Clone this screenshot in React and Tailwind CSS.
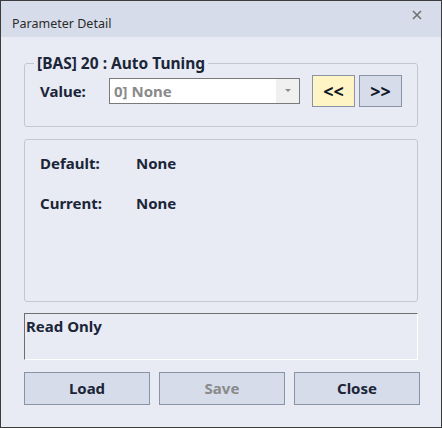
import React from 'react';

const font = { fontFamily: '"Noto Sans", "Open Sans", sans-serif' };

const ParameterDetail = () => {
  return (
    <div className="w-[442px] h-[428px] border border-[#3c3c3c] bg-[#e8ebf4] flex flex-col text-[#1b2538]" style={font}>
      {/* title bar */}
      <div className="h-[36px] bg-[#d6dce9] flex items-start justify-between pl-[11px] pr-[19px] shrink-0">
        <span className="mt-[14px] text-[12.5px] leading-[17px] text-[#2b2b2b]">Parameter Detail</span>
        <svg width="10" height="10" viewBox="0 0 10 10" className="mt-[9px]">
          <path d="M1 1 L9 9 M9 1 L1 9" stroke="#707070" strokeWidth="1.6" />
        </svg>
      </div>

      <div className="px-[23px] pt-[16px] flex flex-col">
        <fieldset className="m-0 border border-[#c3c7d0] rounded-[3px] px-[15px] pt-[2px] pb-[19px]">
          <legend className="ml-[-6px] px-[3px] text-[15.5px] font-bold leading-[20px]">[BAS] 20 : Auto Tuning</legend>
          <div className="flex items-center">
            <span className="w-[69px] text-[15px] font-bold">Value:</span>
            <div className="w-[191px] h-[26px] border border-[#7a7a7a] bg-white flex items-center justify-between">
              <span className="pl-[4px] text-[15px] font-bold text-[#8a8a8a]">0] None</span>
              <div className="w-[23px] h-full bg-[#f0f0f0] flex items-center justify-center">
                <svg width="6" height="4" viewBox="0 0 6 4">
                  <path d="M0 0 L6 0 L3 3 Z" fill="#8a8a8a" />
                </svg>
              </div>
            </div>
            <button className="ml-[12px] w-[43px] h-[32px] border border-[#8a93a5] bg-[#fff5c4] text-[18px] font-bold leading-none text-[#101828]">&lt;&lt;</button>
            <button className="ml-[4px] w-[43px] h-[32px] border border-[#8a93a5] bg-[#d6dce9] text-[18px] font-bold leading-none text-[#101828]">&gt;&gt;</button>
          </div>
        </fieldset>

        <div className="mt-[12px] h-[163px] border border-[#c3c7d0] rounded-[3px] px-[15px] pt-[13px] flex flex-col gap-[20px]">
          <div className="flex text-[15px] font-bold leading-[20px]">
            <span className="w-[96px]">Default:</span>
            <span>None</span>
          </div>
          <div className="flex text-[15px] font-bold leading-[20px]">
            <span className="w-[96px]">Current:</span>
            <span>None</span>
          </div>
        </div>

        <div className="mt-[11px] h-[47px] border border-t-[#6e6e6e] border-l-[#6e6e6e] border-r-white border-b-white px-[1px]">
          <span className="text-[15px] font-bold leading-[20px]">Read Only</span>
        </div>

        <div className="mt-[12px] mr-[-2px] flex gap-[9px]">
          <button className="w-[126px] h-[33px] border border-[#8a93a5] bg-[#d6dce9] text-[15px] font-bold">Load</button>
          <button className="w-[126px] h-[33px] border border-[#8a93a5] bg-[#d6dce9] text-[15px] font-bold text-[#8a8a8a]">Save</button>
          <button className="w-[126px] h-[33px] border border-[#8a93a5] bg-[#d6dce9] text-[15px] font-bold">Close</button>
        </div>
      </div>
    </div>
  );
};

export default ParameterDetail;
